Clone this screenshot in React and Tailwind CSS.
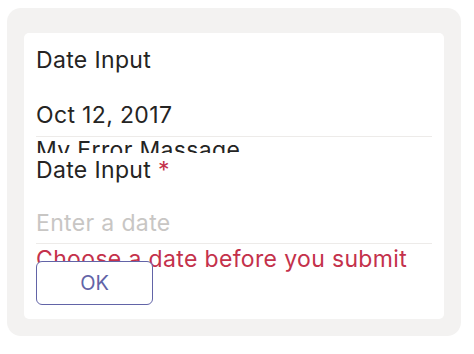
export default function App() {
  return (
    <div className="w-[474px] h-[354px] bg-white pt-[8px] pl-[7px] font-['Inter',sans-serif] text-[23px] leading-[26px] tracking-[0.35px] text-[#252423]">
      <div className="w-[454px] h-[328px] rounded-[14px] bg-[#f3f2f1] pt-[25px] pl-[17px]">
        <div className="w-[420px] h-[286px] rounded-[5px] bg-white pl-[12px] pr-[12px] pt-[14px] flex flex-col">
          <div>Date Input</div>
          <div className="mt-[29px] pb-[8px] border-b border-[#edebe9]">
            Oct 12, 2017
          </div>
          <div className="h-[16px] overflow-hidden">My Error Massage</div>
          <div className="mt-[4px]">
            Date Input <span className="text-[#c4314b]">*</span>
          </div>
          <div className="mt-[27px] pb-[7px] border-b border-[#edebe9] text-[#c8c6c4]">
            Enter a date
          </div>
          <div className="mt-[2px] text-[#c4314b]">Choose a date before you submit</div>
          <button className="-mt-[11px] w-[117px] h-[44px] rounded-[6px] border-[1.5px] border-[#6264a7] bg-white text-[#6264a7] text-[20px] tracking-normal">
            OK
          </button>
        </div>
      </div>
    </div>
  );
}
